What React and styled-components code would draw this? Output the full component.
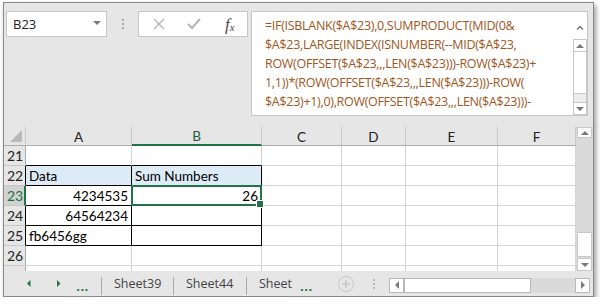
import React from 'react';
import styled, { createGlobalStyle } from 'styled-components';

const GlobalStyle = createGlobalStyle`
  html, body { margin: 0; padding: 0; background: #ffffff; }
  * { box-sizing: border-box; }
`;

const GREEN = '#217346';
const GRID = '#d4d4d4';

// Window frame
const Window = styled.div`
  margin: 2px 0 0 3px;
  width: 591px;
  height: 295px;
  border: 1px solid #8a8a8a;
  background: #e6e6e6;
  box-shadow: 2px 3px 5px rgba(0, 0, 0, 0.4);
  display: flex;
  flex-direction: column;
  overflow: hidden;
`;

// Formula bar
const FormulaBar = styled.div`
  height: 124px;
  display: flex;
  align-items: flex-start;
  padding: 8px 0 0 2px;
`;

const NameBox = styled.div`
  width: 101px;
  height: 26px;
  background: #fff;
  border: 1px solid #c6c6c6;
  display: flex;
  align-items: center;
  justify-content: space-between;
  padding: 0 5px 0 6px;
  font-family: 'Open Sans', sans-serif;
  font-size: 13px;
  color: #222;
`;

const DropTri = styled.span`
  width: 0;
  height: 0;
  border-left: 4px solid transparent;
  border-right: 4px solid transparent;
  border-top: 4px solid #7a7a7a;
  margin-bottom: 2px;
`;

const Grip = styled.div`
  width: 31px;
  height: 26px;
  display: flex;
  flex-direction: column;
  align-items: center;
  justify-content: center;
  gap: 2px;
  & > span {
    width: 2px;
    height: 2px;
    background: #a8a8a8;
  }
`;

const FxBox = styled.div`
  width: 110px;
  height: 26px;
  background: #fff;
  border: 1px solid #c6c6c6;
  display: flex;
  align-items: center;
  padding-left: 14px;
  gap: 22px;
`;

const FxText = styled.span`
  font-family: 'Liberation Serif', serif;
  font-style: italic;
  font-size: 17px;
  color: #4a4a4a;
  margin-left: 2px;
  line-height: 1;
  & sub {
    font-size: 11px;
    vertical-align: -1px;
  }
`;

const FormulaBox = styled.div`
  margin-left: 3px;
  width: 337px;
  height: 105px;
  background: #fff;
  border: 1px solid #c6c6c6;
  display: flex;
  padding: 4px 0 0 13px;
`;

const FormulaText = styled.div`
  flex: 1;
  font-family: 'Open Sans', sans-serif;
  font-size: 12.5px;
  letter-spacing: -0.3px;
  line-height: 19px;
  color: #a0561c;
  white-space: pre;
  overflow: hidden;
`;

const FScroll = styled.div`
  width: 15px;
  display: flex;
  flex-direction: column;
  align-items: center;
`;

const Caret = styled.div`
  height: 18px;
  display: flex;
  align-items: center;
  margin: 3px 0;
`;

const FTrack = styled.div`
  width: 14px;
  height: 78px;
  border: 1px solid #c8c8c8;
  display: flex;
  flex-direction: column;
  background: #ececec;
`;

const ArrowBtn = styled.div`
  height: ${(p) => p.$h || 12}px;
  background: #fff;
  display: flex;
  align-items: center;
  justify-content: center;
  border-bottom: ${(p) => (p.$top ? '1px solid #c8c8c8' : 'none')};
  border-top: ${(p) => (p.$bottom ? '1px solid #c8c8c8' : 'none')};
`;

const Thumb = styled.div`
  height: ${(p) => p.$h}px;
  background: #fff;
  border-bottom: 1px solid #c8c8c8;
`;

const Spacer = styled.div`
  flex: 1;
`;

// Sheet area
const SheetArea = styled.div`
  height: 144px;
  display: flex;
  overflow: hidden;
`;

const Sheet = styled.div`
  display: grid;
  grid-template-columns: 22px 106px 130px 80px 64px 92px 78px;
  grid-template-rows: 19px repeat(7, 20px);
  background: #fff;
  font-family: 'Lato', sans-serif;
  font-size: 13.5px;
  color: #000;
`;

const ColHead = styled.div`
  background: #e6e6e6;
  border-right: 1px solid #c8c8c8;
  border-bottom: ${(p) => (p.$sel ? `2px solid ${GREEN}` : '1px solid #ababab')};
  display: flex;
  align-items: center;
  justify-content: center;
  color: ${(p) => (p.$sel ? '#1e5b38' : '#222')};
  padding-top: 1px;
`;

const Corner = styled.div`
  background: #e6e6e6;
  border-right: 1px solid #c8c8c8;
  border-bottom: 1px solid #ababab;
  position: relative;
  &::after {
    content: '';
    position: absolute;
    right: 3px;
    bottom: 3px;
    width: 0;
    height: 0;
    border-left: 12px solid transparent;
    border-bottom: 12px solid #b8b8b8;
  }
`;

const RowHead = styled.div`
  background: ${(p) => (p.$sel ? '#d2d2d2' : '#e6e6e6')};
  color: ${(p) => (p.$sel ? GREEN : '#222')};
  border-right: ${(p) =>
    p.$sel ? `2px solid ${GREEN}` : `1px solid ${p.$rb || '#ababab'}`};
  border-bottom: 1px solid #c8c8c8;
  display: flex;
  align-items: flex-end;
  padding: 0 0 1px 3px;
  font-size: 14px;
`;

const Cell = styled.div`
  position: relative;
  background: ${(p) => p.$bg || '#fff'};
  border-right: 1px solid ${(p) => p.$rb || GRID};
  border-bottom: 1px solid ${(p) => p.$bb || GRID};
  display: flex;
  align-items: flex-end;
  justify-content: ${(p) => (p.$right ? 'flex-end' : 'flex-start')};
  padding: 0 3px 1px 3px;
  white-space: nowrap;
`;

const Selection = styled.div`
  position: absolute;
  top: -1px;
  left: -1px;
  right: -1px;
  bottom: -1px;
  border: 2px solid ${GREEN};
  z-index: 2;
  &::after {
    content: '';
    position: absolute;
    right: -4px;
    bottom: -4px;
    width: 6px;
    height: 6px;
    background: ${GREEN};
    border: 1px solid #fff;
  }
`;

const VScroll = styled.div`
  width: 17px;
  display: flex;
  flex-direction: column;
  background: #dadada;
  padding: 0 1px;
`;

const VBtn = styled.div`
  height: ${(p) => p.$h}px;
  background: #fff;
  border: 1px solid #c8c8c8;
  display: flex;
  align-items: center;
  justify-content: center;
`;

const VGap = styled.div`
  height: ${(p) => p.$h}px;
`;

// Tab bar
const TabBar = styled.div`
  height: 25px;
  display: flex;
  align-items: center;
  font-family: 'Open Sans', sans-serif;
  font-size: 12.5px;
  color: #444;
`;

const NavBtn = styled.div`
  width: ${(p) => p.$w}px;
  height: 20px;
  display: flex;
  justify-content: center;
  align-items: center;
`;

const GreenDots = styled.span`
  color: ${GREEN};
  font-weight: 700;
  font-size: 13px;
  letter-spacing: 0.5px;
  margin-top: 4px;
`;

const Sep = styled.div`
  width: 1px;
  height: 18px;
  background: #ababab;
  margin-top: 4px;
`;

const Tab = styled.div`
  width: ${(p) => p.$w}px;
  display: flex;
  align-items: center;
  padding-left: ${(p) => p.$pl}px;
  gap: 8px;
`;

const PlusCircle = styled.div`
  width: 16px;
  height: 16px;
  border-radius: 50%;
  border: 1px solid #c8c8c8;
  display: flex;
  align-items: center;
  justify-content: center;
  margin-left: 21px;
`;

const VDots = styled.div`
  margin-left: 19px;
  display: flex;
  flex-direction: column;
  gap: 2px;
  & > span {
    width: 2px;
    height: 2px;
    background: #b8b8b8;
  }
`;

const HScroll = styled.div`
  margin-left: 14px;
  width: 201px;
  height: 15px;
  margin-top: 3px;
  display: flex;
  background: #dadada;
`;

const HBtn = styled.div`
  width: ${(p) => p.$w}px;
  background: #fff;
  border: 1px solid #b8b8b8;
  display: flex;
  align-items: center;
  justify-content: center;
`;

const Tri = ({ dir, color = '#7a7a7a', size = 4 }) => {
  const pts = {
    up: `0,${size} ${size},0 ${size * 2},${size}`,
    down: `0,0 ${size * 2},0 ${size},${size}`,
    left: `${size},0 ${size},${size * 2} 0,${size}`,
    right: `0,0 0,${size * 2} ${size},${size}`,
  }[dir];
  const horiz = dir === 'up' || dir === 'down';
  return (
    <svg width={horiz ? size * 2 : size} height={horiz ? size : size * 2}>
      <polygon points={pts} fill={color} />
    </svg>
  );
};

const formula = [
  '=IF(ISBLANK($A$23),0,SUMPRODUCT(MID(0&',
  '$A$23,LARGE(INDEX(ISNUMBER(--MID($A$23,',
  'ROW(OFFSET($A$23,,,LEN($A$23)))-ROW($A$23)+',
  '1,1))*(ROW(OFFSET($A$23,,,LEN($A$23)))-ROW(',
  '$A$23)+1),0),ROW(OFFSET($A$23,,,LEN($A$23)))-',
].join('\n');

const cols = ['A', 'B', 'C', 'D', 'E', 'F'];
// row 27 only peeks in at the bottom edge, its number is hidden
const rows = [21, 22, 23, 24, 25, 26, 27];
const values = {
  A22: { text: 'Data' },
  B22: { text: 'Sum Numbers' },
  A23: { text: '4234535', right: true },
  B23: { text: '26', right: true },
  A24: { text: '64564234', right: true },
  A25: { text: 'fb6456gg' },
};

const inBox = (r, c) => r >= 22 && r <= 25 && c <= 1;

const App = () => {
  return (
    <>
      <GlobalStyle />
      <Window>
        <FormulaBar>
          <NameBox>
            B23
            <DropTri />
          </NameBox>
          <Grip>
            <span />
            <span />
            <span />
          </Grip>
          <FxBox>
            <svg width="12" height="12" viewBox="0 0 12 12">
              <path d="M1 1 L11 11 M11 1 L1 11" stroke="#b4b4b4" strokeWidth="1.3" />
            </svg>
            <svg width="14" height="12" viewBox="0 0 14 12">
              <path d="M1 6 L5 10 L13 1" stroke="#b4b4b4" strokeWidth="2" fill="none" />
            </svg>
            <FxText>
              f<sub>x</sub>
            </FxText>
          </FxBox>
          <FormulaBox>
            <FormulaText>{formula}</FormulaText>
            <FScroll>
              <Caret>
                <svg width="8" height="5" viewBox="0 0 8 5">
                  <path d="M1 4.5 L4 1.5 L7 4.5" stroke="#777" strokeWidth="1.5" fill="none" />
                </svg>
              </Caret>
              <FTrack>
                <ArrowBtn $top $h={12}>
                  <Tri dir="up" size={4} />
                </ArrowBtn>
                <Thumb $h={42} />
                <Spacer />
                <ArrowBtn $bottom $h={12}>
                  <Tri dir="down" size={4} />
                </ArrowBtn>
              </FTrack>
            </FScroll>
          </FormulaBox>
        </FormulaBar>

        <SheetArea>
          <Sheet>
            <Corner />
            {cols.map((c) => (
              <ColHead key={c} $sel={c === 'B'}>
                {c}
              </ColHead>
            ))}
            {rows.map((r) => (
              <React.Fragment key={r}>
                <RowHead $sel={r === 23} $rb={r >= 22 && r <= 25 ? '#000' : undefined}>
                  {r < 27 ? r : ''}
                </RowHead>
                {cols.map((c, ci) => {
                  const id = `${c}${r}`;
                  const v = values[id];
                  const boxed = inBox(r, ci);
                  const rb = boxed ? '#000' : undefined;
                  const bb = boxed || inBox(r + 1, ci) ? '#000' : undefined;
                  const bg = r === 22 && ci <= 1 ? '#ddebf7' : undefined;
                  return (
                    <Cell key={id} $rb={rb} $bb={bb} $bg={bg} $right={v && v.right}>
                      {v ? v.text : ''}
                      {id === 'B23' && <Selection />}
                    </Cell>
                  );
                })}
              </React.Fragment>
            ))}
          </Sheet>
          <VScroll>
            <VBtn $h={11}>
              <Tri dir="up" size={4} />
            </VBtn>
            <VGap $h={94} />
            <VBtn $h={25} />
            <VGap $h={1} />
            <VBtn $h={13}>
              <Tri dir="down" size={4} />
            </VBtn>
          </VScroll>
        </SheetArea>

        <TabBar>
          <NavBtn $w={50}>
            <Tri dir="left" color={GREEN} size={3.5} />
          </NavBtn>
          <NavBtn $w={10}>
            <Tri dir="right" color={GREEN} size={3.5} />
          </NavBtn>
          <NavBtn $w={37}>
            <GreenDots>...</GreenDots>
          </NavBtn>
          <Sep />
          <Tab $w={71} $pl={12}>Sheet39</Tab>
          <Sep />
          <Tab $w={72} $pl={12}>Sheet44</Tab>
          <Sep />
          <Tab $w={70} $pl={12}>
            Sheet
            <GreenDots>...</GreenDots>
          </Tab>
          <PlusCircle>
            <svg width="10" height="10" viewBox="0 0 10 10">
              <path d="M5 1 V9 M1 5 H9" stroke="#c8c8c8" strokeWidth="1.5" />
            </svg>
          </PlusCircle>
          <VDots>
            <span />
            <span />
            <span />
          </VDots>
          <HScroll>
            <HBtn $w={15}>
              <Tri dir="left" size={4} />
            </HBtn>
            <HBtn $w={127} />
            <Spacer />
            <HBtn $w={15}>
              <Tri dir="right" size={4} />
            </HBtn>
          </HScroll>
        </TabBar>
      </Window>
    </>
  );
};

export default App;
